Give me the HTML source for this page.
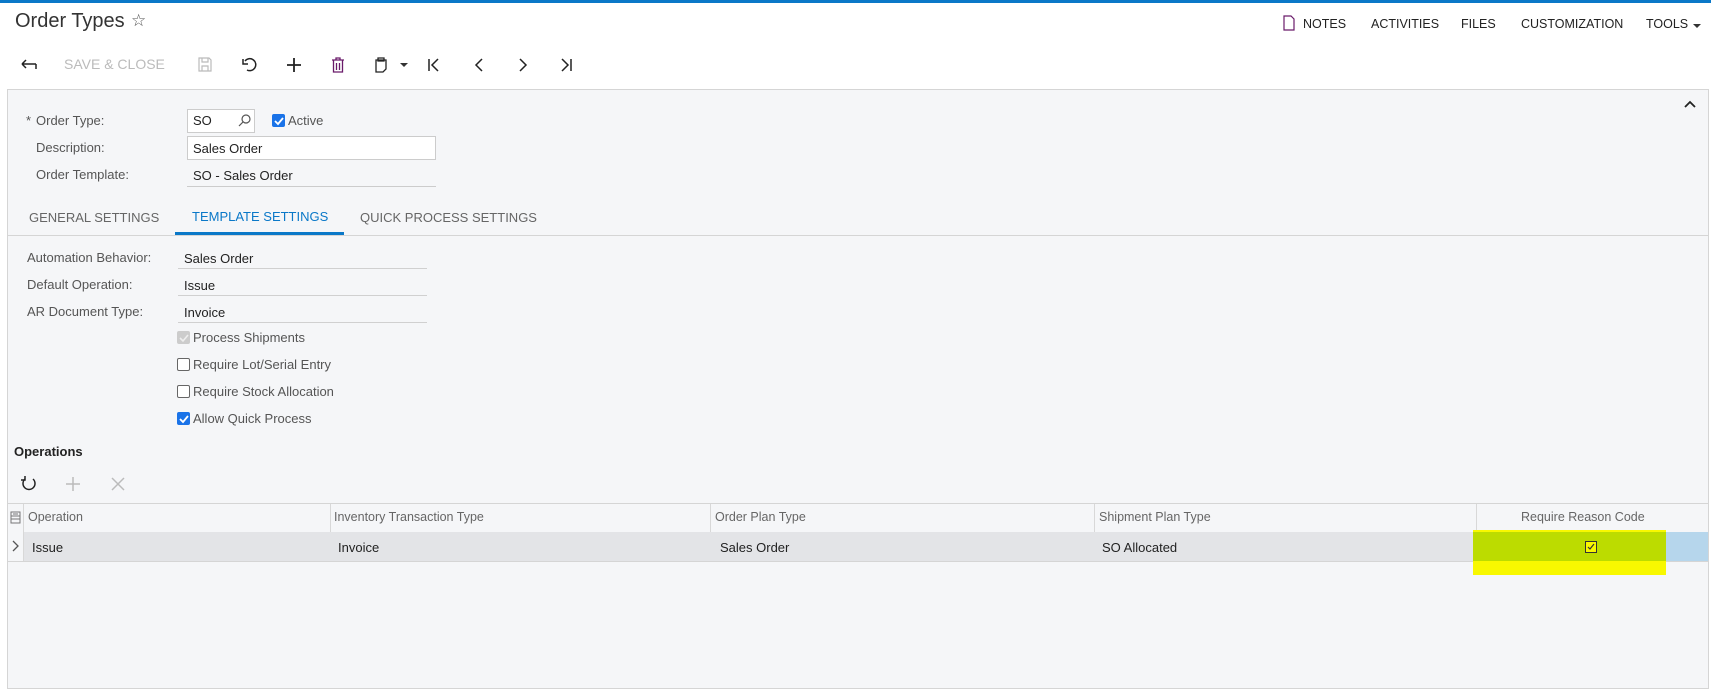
<!DOCTYPE html>
<html><head><meta charset="utf-8"><style>
*{box-sizing:border-box;margin:0;padding:0}
body{width:1711px;height:636px;overflow:hidden;background:#fff;font-family:"Liberation Sans",Arial,sans-serif;font-size:13px;color:#222;position:relative}
.a{position:absolute;white-space:nowrap}
.lbl{color:#555}
.menu{font-size:12.5px;color:#222;top:17px}
.tb{top:55px}
svg{display:block}
.cb{position:absolute;width:13px;height:13px;border:1px solid #666;border-radius:2px;background:#fff}
.cbon{background:#1a73e8;border-color:#1a73e8}
.hdr{color:#666;font-size:12.5px;top:510px}
.vline{position:absolute;width:1px;background:#d8d8d8}
</style></head><body>
<div class="a" style="left:0;top:0;width:1711px;height:3px;background:#0a78c8"></div>
<div class="a" style="left:15px;top:10px;font-size:20px;color:#333">Order Types</div>
<div class="a" style="left:131px;top:11px;font-size:17px;color:#555">☆</div>

<svg class="a" style="left:1283px;top:15px" width="12" height="16"><path d="M1 1h7l3 3v11H1z" fill="none" stroke="#6a1b6a" stroke-width="1.2"/></svg>
<div class="a menu" style="left:1303px">NOTES</div>
<div class="a menu" style="left:1371px">ACTIVITIES</div>
<div class="a menu" style="left:1461px">FILES</div>
<div class="a menu" style="left:1521px">CUSTOMIZATION</div>
<div class="a menu" style="left:1646px">TOOLS</div>
<div class="a" style="left:1693px;top:24px;border:4px solid transparent;border-top:4px solid #333"></div>

<svg class="a" style="left:20px;top:58px" width="18" height="14"><path d="M2 6h14M2 6l4-4M2 6l4 4M16 6v5" fill="none" stroke="#222" stroke-width="1.5"/></svg>
<div class="a tb" style="left:64px;top:56px;color:#bbb;font-size:14px">SAVE &amp; CLOSE</div>
<svg class="a" style="left:198px;top:57px" width="14" height="15"><path d="M1 1h10l2 2v11H1z M4 1v4h6V1 M4 14V9h6v5" fill="none" stroke="#bbb" stroke-width="1.2"/></svg>
<svg class="a" style="left:242px;top:57px" width="16" height="15"><path d="M3 4a6 6 0 1 1 2 9" fill="none" stroke="#222" stroke-width="1.5"/><path d="M1 2v5h5" fill="none" stroke="#222" stroke-width="1.5"/></svg>
<svg class="a" style="left:286px;top:57px" width="16" height="16"><path d="M8 1v14M1 8h14" stroke="#222" stroke-width="1.8"/></svg>
<svg class="a" style="left:331px;top:57px" width="14" height="16"><path d="M1 3h12M5 3V1h4v2M2.5 3v12h9V3M5.5 6v7M8.5 6v7" fill="none" stroke="#6a1b6a" stroke-width="1.3"/></svg>
<svg class="a" style="left:374px;top:57px" width="14" height="16"><path d="M2 3h10v9l-3 3H2z M4 1h6v3H4z" fill="none" stroke="#222" stroke-width="1.3"/></svg>
<div class="a" style="left:400px;top:63px;border:4px solid transparent;border-top:4px solid #333"></div>
<svg class="a" style="left:427px;top:58px" width="14" height="14"><path d="M2 1v12M11 1L5 7l6 6" fill="none" stroke="#222" stroke-width="1.5"/></svg>
<svg class="a" style="left:474px;top:58px" width="10" height="14"><path d="M8 1L2 7l6 6" fill="none" stroke="#222" stroke-width="1.5"/></svg>
<svg class="a" style="left:518px;top:58px" width="10" height="14"><path d="M2 1l6 6-6 6" fill="none" stroke="#222" stroke-width="1.5"/></svg>
<svg class="a" style="left:559px;top:58px" width="14" height="14"><path d="M3 1l6 6-6 6M12 1v12" fill="none" stroke="#222" stroke-width="1.5"/></svg>

<div class="a" style="left:7px;top:89px;width:1702px;height:600px;background:#f5f6f8;border:1px solid #d5d5d5"></div>
<svg class="a" style="left:1684px;top:100px" width="12" height="8"><path d="M1 7l5-5 5 5" fill="none" stroke="#222" stroke-width="1.8"/></svg>

<div class="a lbl" style="left:26px;top:113px">*</div>
<div class="a lbl" style="left:36px;top:113px">Order Type:</div>
<div class="a" style="left:187px;top:109px;width:68px;height:24px;background:#fff;border:1px solid #ccc"></div>
<div class="a" style="left:193px;top:113px">SO</div>
<svg class="a" style="left:238px;top:113px" width="14" height="14"><circle cx="8" cy="6" r="4" fill="none" stroke="#555" stroke-width="1.2"/><path d="M5 9l-4 4" stroke="#555" stroke-width="1.2"/></svg>
<div class="cb cbon" style="left:272px;top:114px"></div>
<svg class="a" style="left:273px;top:115px" width="12" height="12"><path d="M2 6l3 3 5-6" fill="none" stroke="#fff" stroke-width="1.8"/></svg>
<div class="a lbl" style="left:288px;top:113px">Active</div>

<div class="a lbl" style="left:36px;top:140px">Description:</div>
<div class="a" style="left:187px;top:136px;width:249px;height:24px;background:#fff;border:1px solid #ccc"></div>
<div class="a" style="left:193px;top:141px">Sales Order</div>

<div class="a lbl" style="left:36px;top:167px">Order Template:</div>
<div class="a" style="left:193px;top:168px">SO - Sales Order</div>
<div class="a" style="left:187px;top:186px;width:249px;height:1px;background:#ccc"></div>

<div class="a" style="left:29px;top:210px;color:#666;font-size:13px">GENERAL SETTINGS</div>
<div class="a" style="left:192px;top:209px;color:#0a78c8;font-size:13px">TEMPLATE SETTINGS</div>
<div class="a" style="left:360px;top:210px;color:#666;font-size:13px">QUICK PROCESS SETTINGS</div>
<div class="a" style="left:8px;top:235px;width:1700px;height:1px;background:#d5d5d5"></div>
<div class="a" style="left:175px;top:232px;width:169px;height:3px;background:#0a78c8"></div>

<div class="a lbl" style="left:27px;top:250px">Automation Behavior:</div>
<div class="a" style="left:184px;top:251px">Sales Order</div>
<div class="a" style="left:178px;top:268px;width:249px;height:1px;background:#d0d0d0"></div>
<div class="a lbl" style="left:27px;top:277px">Default Operation:</div>
<div class="a" style="left:184px;top:278px">Issue</div>
<div class="a" style="left:178px;top:295px;width:249px;height:1px;background:#d0d0d0"></div>
<div class="a lbl" style="left:27px;top:304px">AR Document Type:</div>
<div class="a" style="left:184px;top:305px">Invoice</div>
<div class="a" style="left:178px;top:322px;width:249px;height:1px;background:#d0d0d0"></div>

<div class="cb" style="left:177px;top:331px;background:#ccc;border-color:#ccc"></div>
<svg class="a" style="left:178px;top:332px" width="12" height="12"><path d="M2 6l3 3 5-6" fill="none" stroke="#eee" stroke-width="1.6"/></svg>
<div class="a lbl" style="left:193px;top:330px">Process Shipments</div>
<div class="cb" style="left:177px;top:358px"></div>
<div class="a lbl" style="left:193px;top:357px">Require Lot/Serial Entry</div>
<div class="cb" style="left:177px;top:385px"></div>
<div class="a lbl" style="left:193px;top:384px">Require Stock Allocation</div>
<div class="cb cbon" style="left:177px;top:412px"></div>
<svg class="a" style="left:178px;top:413px" width="12" height="12"><path d="M2 6l3 3 5-6" fill="none" stroke="#fff" stroke-width="1.8"/></svg>
<div class="a lbl" style="left:193px;top:411px">Allow Quick Process</div>

<div class="a" style="left:14px;top:444px;font-weight:bold;color:#222">Operations</div>
<svg class="a" style="left:21px;top:475px" width="16" height="16"><path d="M12 4a6 6 0 1 1-8 0" fill="none" stroke="#222" stroke-width="1.5"/><path d="M4 1v4H0" fill="none" stroke="#222" stroke-width="1.5"/></svg>
<svg class="a" style="left:65px;top:476px" width="16" height="16"><path d="M8 1v14M1 8h14" stroke="#bbb" stroke-width="1.5"/></svg>
<svg class="a" style="left:111px;top:477px" width="14" height="14"><path d="M1 1l12 12M13 1L1 13" stroke="#bbb" stroke-width="1.5"/></svg>

<div class="a" style="left:8px;top:503px;width:1700px;height:1px;background:#d5d5d5"></div>
<div class="a" style="left:8px;top:532px;width:1700px;height:29px;background:#e3e4e7"></div>
<div class="a" style="left:8px;top:532px;width:15px;height:29px;background:#f5f6f8"></div>
<div class="a" style="left:8px;top:561px;width:1700px;height:1px;background:#d5d5d5"></div>
<div class="vline" style="left:23px;top:504px;height:57px"></div>
<div class="vline" style="left:330px;top:504px;height:28px"></div>
<div class="vline" style="left:710px;top:504px;height:28px"></div>
<div class="vline" style="left:1094px;top:504px;height:28px"></div>
<div class="vline" style="left:1476px;top:504px;height:28px"></div>
<svg class="a" style="left:10px;top:511px" width="11" height="13"><path d="M1 1h9v11H1zM1 5h9M1 8h9M3 3h5" fill="none" stroke="#777" stroke-width="1"/></svg>
<div class="a hdr" style="left:28px">Operation</div>
<div class="a hdr" style="left:334px">Inventory Transaction Type</div>
<div class="a hdr" style="left:715px">Order Plan Type</div>
<div class="a hdr" style="left:1099px">Shipment Plan Type</div>
<div class="a hdr" style="left:1521px">Require Reason Code</div>
<svg class="a" style="left:12px;top:540px" width="8" height="12"><path d="M1 1l5 5-5 5" fill="none" stroke="#555" stroke-width="1.3"/></svg>
<div class="a" style="left:32px;top:540px">Issue</div>
<div class="a" style="left:338px;top:540px">Invoice</div>
<div class="a" style="left:720px;top:540px">Sales Order</div>
<div class="a" style="left:1102px;top:540px">SO Allocated</div>
<div class="a" style="left:1665px;top:532px;width:43px;height:29px;background:#b6d6ec"></div>
<div class="a" style="left:1473px;top:530px;width:193px;height:45px;background:#f8f800"></div>
<div class="a" style="left:1473px;top:532px;width:193px;height:29px;background:#bcdc00"></div>
<div class="a" style="left:1585px;top:541px;width:12px;height:12px;border:1px solid #333;background:#f8f800"></div>
<svg class="a" style="left:1586px;top:542px" width="10" height="10"><path d="M2 5l2 2 4-5" fill="none" stroke="#333" stroke-width="1.2"/></svg>
</body></html>
